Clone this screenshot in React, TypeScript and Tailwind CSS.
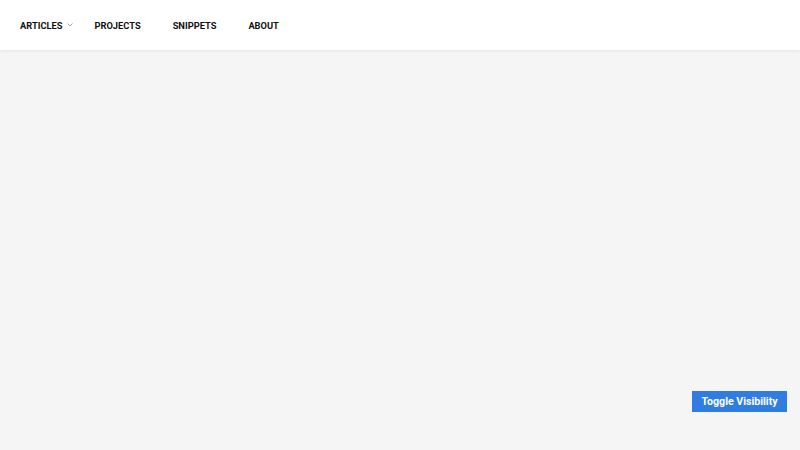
import { useState } from 'react';

const NAV_ITEMS = ['PROJECTS', 'SNIPPETS', 'ABOUT'];

export default function App() {
  const [visible, setVisible] = useState(true);

  return (
    <div
      className="flex h-screen w-full flex-col bg-[#f5f5f5]"
      style={{ fontFamily: 'Roboto, "Liberation Sans", sans-serif' }}
    >
      {/* Header */}
      <header className="z-10 flex h-[50px] shrink-0 items-center bg-white pl-[20px] pt-[1px] shadow-[0_1px_3px_rgba(0,0,0,0.08)]">
        {visible && (
          <nav className="flex items-center gap-[32px]">
            <div className="flex items-center">
              <span className="text-[9.3px] font-bold text-[#111]">ARTICLES</span>
              <svg className="ml-[5px] mb-[2px]" width="6" height="4" viewBox="0 0 6 4" fill="none">
                <path d="M0.5 0.5 L3 3 L5.5 0.5" stroke="#aaa" strokeWidth="1" />
              </svg>
            </div>
            {NAV_ITEMS.map((item) => (
              <span key={item} className="text-[9.3px] font-bold text-[#111] first-of-type:-ml-[11px]">
                {item}
              </span>
            ))}
          </nav>
        )}
      </header>

      {/* Content */}
      <main className="flex flex-1 items-end justify-end pr-[13px] pb-[38px]">
        <button
          onClick={() => setVisible(!visible)}
          className="h-[21px] w-[95px] bg-[#2f7de1] text-[10.6px] font-bold text-white"
        >
          Toggle Visibility
        </button>
      </main>
    </div>
  );
}
